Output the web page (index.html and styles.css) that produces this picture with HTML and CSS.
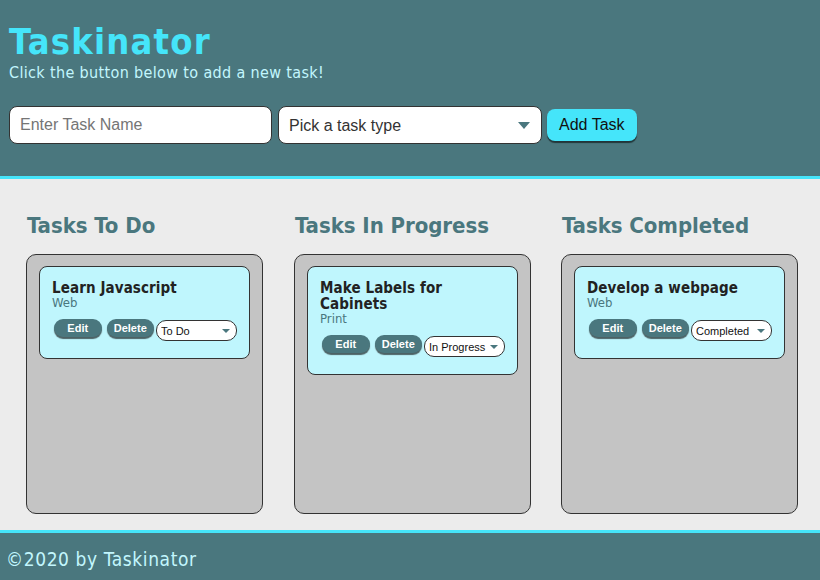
FILE: index.html
```html
<!DOCTYPE html>
<html lang="en">
<head>
<meta charset="utf-8">
<title>Taskinator</title>
<link rel="stylesheet" href="styles.css">
</head>
<body>
<header class="page-header">
  <h1 class="page-title">Taskinator</h1>
  <p class="subtitle">Click the button below to add a new task!</p>
  <form class="task-form">
    <input class="text-input" type="text" placeholder="Enter Task Name">
    <span class="select-wrap big">
      <select class="select-input">
        <option>Pick a task type</option>
      </select>
    </span>
    <button class="btn-add" type="button">Add Task</button>
  </form>
</header>
<main class="board">
  <section class="column">
    <h2 class="column-title">Tasks To Do</h2>
    <ul class="task-list">
      <li class="task-item">
        <h3 class="task-name">Learn Javascript</h3>
        <span class="task-type">Web</span>
        <div class="task-actions">
          <button class="btn" type="button">Edit</button>
          <button class="btn btn-delete" type="button">Delete</button>
          <span class="select-wrap small"><select class="status-select"><option>To Do</option></select></span>
        </div>
      </li>
    </ul>
  </section>
  <section class="column">
    <h2 class="column-title">Tasks In Progress</h2>
    <ul class="task-list">
      <li class="task-item">
        <h3 class="task-name">Make Labels for Cabinets</h3>
        <span class="task-type">Print</span>
        <div class="task-actions">
          <button class="btn" type="button">Edit</button>
          <button class="btn btn-delete" type="button">Delete</button>
          <span class="select-wrap small"><select class="status-select"><option>In Progress</option></select></span>
        </div>
      </li>
    </ul>
  </section>
  <section class="column">
    <h2 class="column-title">Tasks Completed</h2>
    <ul class="task-list">
      <li class="task-item">
        <h3 class="task-name">Develop a webpage</h3>
        <span class="task-type">Web</span>
        <div class="task-actions">
          <button class="btn" type="button">Edit</button>
          <button class="btn btn-delete" type="button">Delete</button>
          <span class="select-wrap small"><select class="status-select"><option>Completed</option></select></span>
        </div>
      </li>
    </ul>
  </section>
</main>
<footer class="page-footer">
  <p class="footer-text">&copy;2020 by Taskinator</p>
</footer>
</body>
</html>
```

FILE: styles.css
```css
* { box-sizing: border-box; }

html, body {
  margin: 0;
  padding: 0;
  height: 100%;
}

body {
  font-family: "DejaVu Sans Condensed", "DejaVu Sans", sans-serif;
  background: #ececec;
  display: flex;
  flex-direction: column;
  overflow: hidden;
}

.page-header {
  background: #4a777e;
  border-bottom: 3px solid #45e5fa;
  padding: 20px 9px 32px;
}

.page-title {
  margin: 0;
  font-size: 36px;
  line-height: 43px;
  font-weight: bold;
  letter-spacing: 1.2px;
  color: #45e5fa;
}

.subtitle {
  margin: 0;
  font-size: 16px;
  line-height: 19px;
  letter-spacing: 0.35px;
  color: #c2f6fd;
}

.task-form {
  display: flex;
  align-items: flex-start;
  margin-top: 24px;
}

.text-input,
.select-input {
  font-family: "Liberation Sans", Arial, sans-serif;
  font-size: 16px;
  height: 38px;
  background: #fff;
  border: 1px solid #333;
  border-radius: 8px;
  padding: 0 10px;
  outline: none;
}

.text-input {
  width: 263px;
  color: #333;
}

.text-input::placeholder {
  color: #757575;
}

.select-wrap {
  position: relative;
  display: inline-block;
}

.select-wrap.big {
  margin-left: 6px;
}

.select-input {
  width: 264px;
  color: #333;
  -webkit-appearance: none;
  appearance: none;
  display: block;
}

.select-wrap::after {
  content: "";
  position: absolute;
  border-left: 6px solid transparent;
  border-right: 6px solid transparent;
  border-top: 7px solid #4a777e;
  pointer-events: none;
}

.select-wrap.big::after {
  right: 12px;
  top: 16px;
}

.btn-add {
  margin: 3px 0 0 5px;
  height: 32px;
  padding: 0 12px;
  font-family: "Liberation Sans", Arial, sans-serif;
  font-size: 16px;
  color: #111;
  background: #45e5fa;
  border: none;
  border-radius: 8px;
  box-shadow: 0 2px 1px rgba(0, 0, 0, 0.55);
}

.board {
  flex: 1;
  display: flex;
  gap: 31px;
  padding: 34px 22px 16px 26px;
  border-bottom: 3px solid #45e5fa;
}

.column {
  width: 237px;
  display: flex;
  flex-direction: column;
}

.column:nth-child(3) {
  margin-left: -1px;
}

.column-title {
  margin: 0 0 15px 1px;
  font-size: 22px;
  line-height: 26px;
  font-weight: bold;
  letter-spacing: -0.05px;
  color: #4a777e;
}

.task-list {
  flex: 1;
  list-style: none;
  margin: 0;
  padding: 11px 12px;
  background: #c4c4c4;
  border: 1px solid #333;
  border-radius: 10px;
}

.task-item {
  background: #bff6fd;
  border: 1px solid #333;
  border-radius: 8px;
  padding: 13px 12px 17px;
}

.task-name {
  margin: 0;
  font-size: 15px;
  line-height: 16px;
  font-weight: bold;
  letter-spacing: 0.1px;
  color: #222;
}

.task-type {
  display: block;
  font-size: 13px;
  line-height: 14px;
  color: #4a777e;
  margin-top: 0;
}

.task-actions {
  display: flex;
  align-items: flex-start;
  margin-top: 9px;
  padding-left: 2px;
}

.btn {
  width: 48px;
  height: 18px;
  padding: 0;
  font-family: "Liberation Sans", Arial, sans-serif;
  font-size: 11px;
  font-weight: bold;
  color: #fff;
  background: #4a777e;
  border: none;
  border-radius: 9px;
  box-shadow: 0 2px 1px rgba(0, 0, 0, 0.6);
  margin-top: 0;
}

.btn-delete {
  margin-left: 5px;
}

.select-wrap.small {
  margin-left: 2px;
  margin-top: 1px;
}

.status-select {
  display: block;
  width: 81px;
  height: 21px;
  padding: 0 4px;
  font-family: "Liberation Sans", Arial, sans-serif;
  font-size: 11px;
  color: #111;
  background: #fff;
  border: 1px solid #333;
  border-radius: 10px;
  -webkit-appearance: none;
  appearance: none;
  outline: none;
}

.select-wrap.small::after {
  right: 7px;
  top: 9px;
  border-left-width: 4px;
  border-right-width: 4px;
  border-top-width: 4px;
  border-top-color: #4a777e;
}

.page-footer {
  background: #4a777e;
  height: 47px;
  padding: 4px 6px 0;
  display: flex;
  align-items: center;
}

.footer-text {
  margin: 0;
  font-size: 19px;
  letter-spacing: 0.6px;
  color: #c2f6fd;
}
```
